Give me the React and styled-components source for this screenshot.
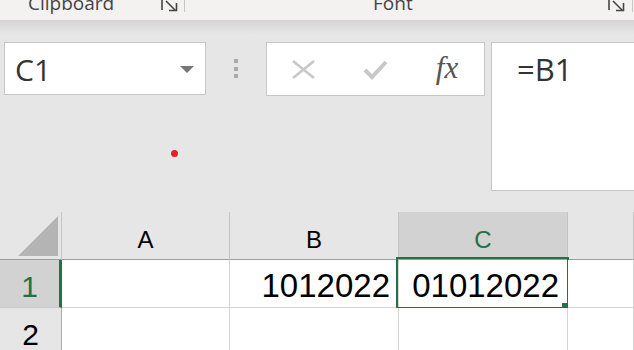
import React from 'react';
import styled, { createGlobalStyle } from 'styled-components';

const GlobalStyle = createGlobalStyle`
  html, body {
    margin: 0;
    padding: 0;
    overflow: hidden;
    background: #e6e6e6;
  }
  body {
    font-family: "Open Sans", "Noto Sans", sans-serif;
  }
`;

const GREEN = '#217346';

const Page = styled.div`
  position: relative;
  width: 634px;
  height: 350px;
  overflow: hidden;
  background: #e6e6e6;
`;

/* ---------- ribbon ---------- */

const Ribbon = styled.div`
  display: flex;
  height: 20px;
  background: #f3f2f1;
  overflow: hidden;
`;

const Group = styled.div`
  display: flex;
  align-items: flex-start;
  width: ${({ width }) => width}px;
  padding-left: ${({ pad }) => pad}px;
  box-sizing: border-box;
  border-right: 1px solid #c8c6c4;
  height: 12px;
`;

const GroupLabel = styled.div`
  font-size: 19px;
  line-height: 18px;
  margin-top: -6px;
  color: #444;
  white-space: nowrap;
`;

const Launcher = styled.svg`
  margin-left: auto;
  margin-right: ${({ gap }) => gap}px;
  flex-shrink: 0;
`;

const LauncherIcon = ({ gap }) => (
  <Launcher gap={gap} width="17" height="12" viewBox="0 0 17 12">
    <g stroke="#444" strokeWidth="1.6" fill="none">
      <line x1="1" y1="0" x2="1" y2="10" />
      <line x1="5" y1="1" x2="14" y2="10" />
      <polyline points="8,10.5 15.5,10.5 15.5,3" />
    </g>
  </Launcher>
);

/* ---------- formula bar ---------- */

const FormulaBar = styled.div`
  display: flex;
  align-items: flex-start;
  height: 192px;
  padding: 22px 0 0 4px;
  box-sizing: border-box;
  background: linear-gradient(#d4d4d4, #e6e6e6 14px);
`;

const NameBox = styled.div`
  display: flex;
  align-items: center;
  width: 202px;
  height: 53px;
  box-sizing: border-box;
  border: 1px solid #c6c6c6;
  background: #fff;
  padding: 2px 11px 0 10px;
  font-size: 30px;
  color: #333;
`;

const NameText = styled.span`
  flex: 1;
`;

const Caret = styled.span`
  width: 0;
  height: 0;
  border-left: 7px solid transparent;
  border-right: 7px solid transparent;
  border-top: 7px solid #777;
`;

const Grip = styled.div`
  display: flex;
  flex-direction: column;
  gap: 3.5px;
  margin: 17px 28px 0 28px;
`;

const GripDot = styled.span`
  width: 4px;
  height: 4px;
  background: #aaa;
`;

const ButtonBox = styled.div`
  display: flex;
  align-items: center;
  width: 219px;
  height: 54px;
  box-sizing: border-box;
  border: 1px solid #c6c6c6;
  background: #fff;
`;

const Btn = styled.div`
  display: flex;
  align-items: center;
  justify-content: center;
  width: 72px;
  height: 100%;
`;

const Fx = styled.span`
  font-family: "Liberation Serif", "DejaVu Serif", serif;
  font-style: italic;
  font-size: 31px;
  color: #555;
  margin-top: -2px;
`;

const FormulaInput = styled.div`
  flex: 1;
  margin-left: 6px;
  height: 149px;
  box-sizing: border-box;
  border: 1px solid #c6c6c6;
  border-right: none;
  background: #fff;
  padding: 11px 0 0 25px;
  font-size: 31px;
  line-height: 31px;
  color: #333;
`;

/* ---------- grid ---------- */

const Sheet = styled.div`
  display: grid;
  grid-template-columns: 62px 168px 169px 169px 1fr;
  grid-auto-rows: 48px;
`;

const Corner = styled.div`
  display: flex;
  align-items: flex-end;
  justify-content: flex-end;
  padding: 0 3px 3px 0;
  box-sizing: border-box;
  border-right: 1px solid #c4c4c4;
  border-bottom: 1px solid #9e9e9e;
`;

const ColHead = styled.div`
  display: flex;
  align-items: center;
  justify-content: center;
  padding-top: 8px;
  box-sizing: border-box;
  font-family: "Liberation Sans", Arial, sans-serif;
  font-size: 24px;
  color: ${({ active }) => (active ? GREEN : '#000')};
  background: ${({ active }) => (active ? '#d2d2d2' : '#e6e6e6')};
  border-bottom: 1px solid #9e9e9e;
  border-right: 1px solid #c4c4c4;
`;

const RowHead = styled.div`
  display: flex;
  align-items: center;
  justify-content: center;
  padding-top: 6px;
  box-sizing: border-box;
  font-family: "Liberation Sans", Arial, sans-serif;
  font-size: 30px;
  color: ${({ active }) => (active ? GREEN : '#000')};
  background: ${({ active }) => (active ? '#d2d2d2' : '#e6e6e6')};
  border-bottom: 1px solid #c8c8c8;
  border-right: ${({ active }) => (active ? `3px solid ${GREEN}` : '1px solid #ababab')};
`;

const Cell = styled.div`
  position: relative;
  display: flex;
  align-items: center;
  justify-content: flex-end;
  padding: 4px 8px 0 0;
  box-sizing: border-box;
  background: #fff;
  font-family: "Liberation Sans", Arial, sans-serif;
  font-size: 33px;
  color: #000;
  border-right: 1px solid #d4d4d4;
  border-bottom: 1px solid #d4d4d4;
`;

const Selection = styled.div`
  position: absolute;
  top: -3px;
  left: -3px;
  width: 173px;
  height: 52px;
  box-sizing: border-box;
  border: 2px solid ${GREEN};
  pointer-events: none;
`;

const FillHandle = styled.div`
  position: absolute;
  left: 163px;
  top: 43px;
  width: 8px;
  height: 8px;
  background: ${GREEN};
`;

const Dot = styled.div`
  position: absolute;
  left: 171px;
  top: 150px;
  width: 7px;
  height: 7px;
  border-radius: 50%;
  background: #e5202a;
`;

export default function App() {
  return (
    <>
      <GlobalStyle />
      <Page>
        <Ribbon>
          <Group width={185} pad={28}>
            <GroupLabel>Clipboard</GroupLabel>
            <LauncherIcon gap={6} />
          </Group>
          <Group width={448} pad={188}>
            <GroupLabel>Font</GroupLabel>
            <LauncherIcon gap={7} />
          </Group>
        </Ribbon>

        <FormulaBar>
          <NameBox>
            <NameText>C1</NameText>
            <Caret />
          </NameBox>
          <Grip>
            <GripDot />
            <GripDot />
            <GripDot />
          </Grip>
          <ButtonBox>
            <Btn>
              <svg width="23" height="19" viewBox="0 0 23 19">
                <g stroke="#c8c8c8" strokeWidth="2.6">
                  <line x1="1" y1="1" x2="22" y2="18" />
                  <line x1="22" y1="1" x2="1" y2="18" />
                </g>
              </svg>
            </Btn>
            <Btn>
              <svg width="25" height="21" viewBox="0 0 25 21">
                <polyline points="2,11 9,18 23,3" stroke="#c8c8c8" strokeWidth="4" fill="none" />
              </svg>
            </Btn>
            <Btn>
              <Fx>fx</Fx>
            </Btn>
          </ButtonBox>
          <FormulaInput>=B1</FormulaInput>
        </FormulaBar>

        <Sheet>
          <Corner>
            <svg width="40" height="40" viewBox="0 0 40 40">
              <polygon points="40,0 40,40 0,40" fill="#b4b4b4" />
            </svg>
          </Corner>
          <ColHead>A</ColHead>
          <ColHead>B</ColHead>
          <ColHead active>C</ColHead>
          <ColHead />

          <RowHead active>1</RowHead>
          <Cell />
          <Cell>1012022</Cell>
          <Cell>
            01012022
            <Selection />
            <FillHandle />
          </Cell>
          <Cell />

          <RowHead>2</RowHead>
          <Cell />
          <Cell />
          <Cell />
          <Cell />
        </Sheet>

        <Dot />
      </Page>
    </>
  );
}
